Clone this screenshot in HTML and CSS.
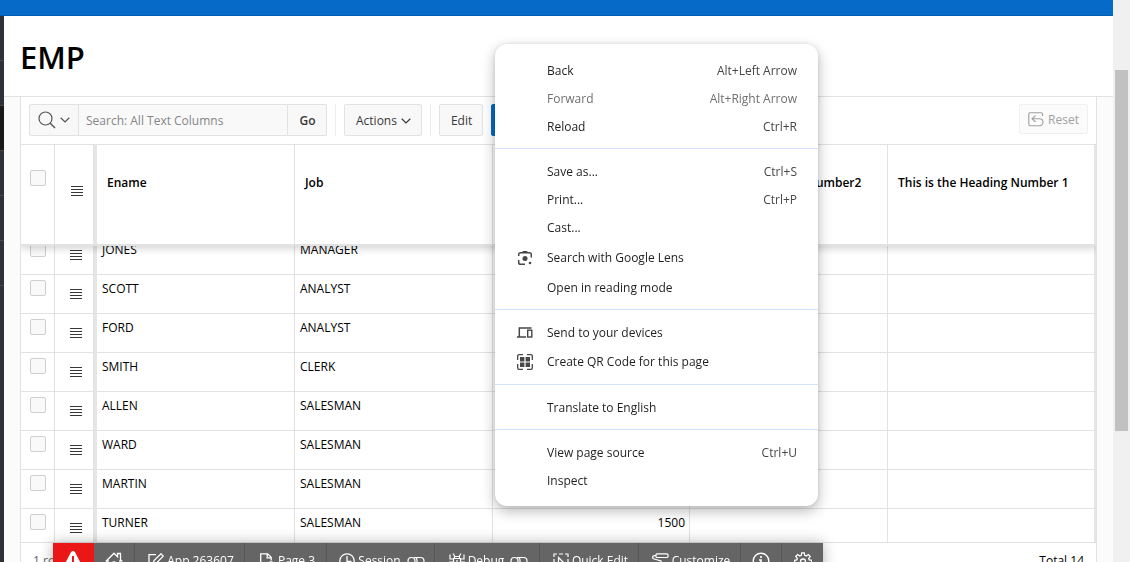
FILE: index.html
```html
<!DOCTYPE html>
<html lang="en">
<head>
<meta charset="utf-8">
<title>EMP</title>
<link rel="stylesheet" href="styles.css">
</head>
<body>
<svg class="defs" aria-hidden="true">
  <symbol id="i-rows" viewBox="0 0 12 10"><path d="M0 .5h12M0 3.5h12M0 6.5h12M0 9.5h12" fill="none" stroke="currentColor"/></symbol>
  <symbol id="i-down" viewBox="0 0 10 6"><path d="M.7.8 5 5 9.300.8" fill="none" stroke="currentColor" stroke-width="1.2"/></symbol>
  <symbol id="i-switch" viewBox="0 0 18 10"><circle cx="4.500" cy="5" r="3.500" fill="none" stroke="currentColor" stroke-width="1.200"/><path d="M7 1.500h6.500a3.500 3.500 0 0 1 0 7c-2.500 0-3.500-1.500-3.500-3.500s0-2.500-1-3.500" fill="none" stroke="currentColor" stroke-width="1.200"/></symbol>
</svg>
<div class="window">
  <div class="app">
    <div class="topbar"></div>
    <div class="shell">
      <nav class="sidenav" aria-label="Main">
        <span class="nav-item"></span><span class="nav-item"></span><span class="nav-item current"></span>
        <span class="nav-item"></span><span class="nav-item"></span><span class="nav-item"></span>
      </nav>
      <main class="main">
        <header class="title"><h1>EMP</h1></header>
        <section class="region">
          <div class="toolbar">
            <div class="search">
              <button class="btn column-btn" type="button" aria-label="Select columns to search">
                <svg width="18" height="18" viewBox="0 0 18 18"><circle cx="7.500" cy="7.500" r="6.500" fill="none" stroke="currentColor" stroke-width="1.200"/><path d="m12 12 5 5" stroke="currentColor" stroke-width="1.400"/></svg>
                <svg width="10" height="6"><use href="#i-down"/></svg>
              </button>
              <input class="search-box" type="text" aria-label="Search" placeholder="Search: All Text Columns">
              <button class="btn go" type="button">Go</button>
            </div>
            <span class="divider"></span>
            <button class="btn" type="button">Actions <svg width="10" height="6"><use href="#i-down"/></svg></button>
            <span class="divider"></span>
            <button class="btn" type="button">Edit</button>
            <button class="btn hot" type="button" aria-label="Save"></button>
            <button class="btn reset" type="button" disabled>
              <svg width="16" height="15" viewBox="0 0 16 15" fill="none" stroke="currentColor" stroke-width="1.100"><path d="M14.500 4V2a1.200 1.200 0 0 0-1.200-1.200H2A1.200 1.200 0 0 0 .8 2v10.500A1.200 1.200 0 0 0 2 13.700h9.500a3.500 3.500 0 0 0 0-7H4.500M7.500 3.500 4 6.700 7.500 10"/></svg>
              Reset
            </button>
          </div>
          <div class="grid-head">
            <table class="grid">
              <colgroup><col class="c-check"><col class="c-menu"><col class="c-data"><col class="c-data"><col class="c-num"><col class="c-data"><col></colgroup>
              <thead><tr>
                <th class="check"><input type="checkbox" aria-label="Select all"></th>
                <th class="menu"><svg width="12" height="10"><use href="#i-rows"/></svg></th>
                <th>Ename</th><th>Job</th><th></th><th class="tight">This is the Heading Number2</th><th>This is the Heading Number 1</th>
              </tr></thead>
            </table>
          </div>
          <div class="grid-body">
            <table class="grid">
              <colgroup><col class="c-check"><col class="c-menu"><col class="c-data"><col class="c-data"><col class="c-num"><col class="c-data"><col></colgroup>
              <tbody>
                <tr><td class="check"><input type="checkbox" aria-label="Select JONES"></td><td class="menu"><svg width="12" height="10"><use href="#i-rows"/></svg></td><td>JONES</td><td>MANAGER</td><td></td><td></td><td></td></tr>
                <tr><td class="check"><input type="checkbox" aria-label="Select SCOTT"></td><td class="menu"><svg width="12" height="10"><use href="#i-rows"/></svg></td><td>SCOTT</td><td>ANALYST</td><td></td><td></td><td></td></tr>
                <tr><td class="check"><input type="checkbox" aria-label="Select FORD"></td><td class="menu"><svg width="12" height="10"><use href="#i-rows"/></svg></td><td>FORD</td><td>ANALYST</td><td></td><td></td><td></td></tr>
                <tr><td class="check"><input type="checkbox" aria-label="Select SMITH"></td><td class="menu"><svg width="12" height="10"><use href="#i-rows"/></svg></td><td>SMITH</td><td>CLERK</td><td></td><td></td><td></td></tr>
                <tr><td class="check"><input type="checkbox" aria-label="Select ALLEN"></td><td class="menu"><svg width="12" height="10"><use href="#i-rows"/></svg></td><td>ALLEN</td><td>SALESMAN</td><td></td><td></td><td></td></tr>
                <tr><td class="check"><input type="checkbox" aria-label="Select WARD"></td><td class="menu"><svg width="12" height="10"><use href="#i-rows"/></svg></td><td>WARD</td><td>SALESMAN</td><td></td><td></td><td></td></tr>
                <tr><td class="check"><input type="checkbox" aria-label="Select MARTIN"></td><td class="menu"><svg width="12" height="10"><use href="#i-rows"/></svg></td><td>MARTIN</td><td>SALESMAN</td><td></td><td></td><td></td></tr>
                <tr><td class="check"><input type="checkbox" aria-label="Select TURNER"></td><td class="menu"><svg width="12" height="10"><use href="#i-rows"/></svg></td><td>TURNER</td><td>SALESMAN</td><td class="num">1500</td><td></td><td></td></tr>
              </tbody>
            </table>
          </div>
          <footer class="grid-foot"><span class="selected">1 rows selected</span><span>Total 14</span></footer>
        </section>
      </main>
    </div>
  </div>
  <div class="scrollbar"><div class="thumb"></div></div>
</div>

<div class="devbar">
  <button class="dev alert" type="button" aria-label="Errors"><svg width="20" height="20" viewBox="0 0 20 20"><path d="M10 0c1 0 1.700.6 2.200 1.500l7.300 14c1 2 0 3.500-2 3.500h-15c-2 0-3-1.500-2-3.500l7.300-14C8.300.6 9 0 10 0z" fill="#fff"/><path d="M10 5v7" stroke="#eb1717" stroke-width="2"/></svg></button>
  <button class="dev home" type="button" aria-label="Home"><svg width="18" height="18" viewBox="0 0 18 18"><path d="M.8 9.500 9 1.200l3.500 3.500V1.500h3v6.200l1.800 1.800M3 8v9h4v-5a2 2 0 0 1 4 0v5h4V8" fill="none" stroke="currentColor" stroke-width="1.300"/></svg></button>
  <button class="dev text appb" type="button"><svg width="16" height="16" viewBox="0 0 16 16"><path d="M8 1.700H1v13h12V9M5 11l1-3.500L13 .8l2.300 2.300L8.500 10z" fill="none" stroke="currentColor" stroke-width="1.300"/></svg>App 263607</button>
  <button class="dev text pageb" type="button"><svg width="16" height="16" viewBox="0 0 16 16"><path d="M7 14.500H1.700V.8h7l3.500 3.500V7.500M8.200 .8v4h4" fill="none" stroke="currentColor" stroke-width="1.300"/><circle cx="12" cy="11.500" r="2.500" fill="none" stroke="currentColor" stroke-width="1.300"/></svg>Page 3</button>
  <button class="dev text session" type="button"><svg width="16" height="16" viewBox="0 0 16 16"><circle cx="8" cy="8" r="7.200" fill="none" stroke="currentColor" stroke-width="1.300"/><path d="M8 3v5.500h4.500" fill="none" stroke="currentColor" stroke-width="1.300"/></svg>Session<svg class="sw" width="18" height="10"><use href="#i-switch"/></svg></button>
  <button class="dev text debug" type="button"><svg width="16" height="16" viewBox="0 0 16 16"><path d="M4.500 5.500h7v5a3.500 3.500 0 0 1-7 0zM5.500 5.500V3.500h5v2M4 .5l2 3M12 .5l-2 3M1 1.500v4.500h3.500M15 1.500v4.500h-3.500M0 9h4.500M16 9h-4.500M8 7V14" fill="none" stroke="currentColor" stroke-width="1.200"/></svg>Debug<svg class="sw" width="18" height="10"><use href="#i-switch"/></svg></button>
  <button class="dev text quick" type="button"><svg width="16" height="16" viewBox="0 0 16 16"><path d="M1 4V1h3M6 1h4M12 1h3v3M1 6v4M1 12v3h3M15 6v4M15 12v3h-3" fill="none" stroke="currentColor" stroke-width="1.200"/><path d="M5.500 4.500v8l2-2h4z" fill="none" stroke="currentColor" stroke-width="1.200"/></svg>Quick Edit</button>
  <button class="dev text custom" type="button"><svg width="17" height="16" viewBox="0 0 17 16"><path d="M5 .8h10a1 1 0 0 1 1 1v1.700a1 1 0 0 1-1 1H5a1 1 0 0 1-1-1V1.800a1 1 0 0 1 1-1zM4 2.600H2.500a1.700 1.700 0 0 0-.3 3.400L9 8v7" fill="none" stroke="currentColor" stroke-width="1.200"/></svg>Customize</button>
  <button class="dev info" type="button" aria-label="Info"><svg width="18" height="18" viewBox="0 0 18 18"><circle cx="9" cy="9" r="7.800" fill="none" stroke="currentColor" stroke-width="1.400"/><path d="M9 4v2M7 8h2v5M6.500 13h5" fill="none" stroke="currentColor" stroke-width="1.600"/></svg></button>
  <button class="dev gear" type="button" aria-label="Settings"><svg width="18" height="18" viewBox="0 0 18 18"><path d="m7.300 3.300.4-2.500h2.600l.4 2.500 1.500.7 2.100-1.500 1.900 1.900-1.500 2.100.6 1.500 2.500.4v2.500l-2.500.4-.6 1.500 1.500 2.100-1.900 1.900-2.100-1.500-1.500.6-.4 2H7.700l-.4-2-1.500-.6-2.100 1.500-1.900-1.900 1.500-2.100-.6-1.500-2-.4V8.400l2-.4.6-1.500-1.500-2.100 1.900-1.900L5.800 4z" fill="none" stroke="currentColor" stroke-width="1.300"/><circle cx="9" cy="9.500" r="2.500" fill="none" stroke="currentColor" stroke-width="1.300"/></svg></button>
</div>

<div class="context">
  <button class="item" type="button"><span>Back</span><kbd>Alt+Left Arrow</kbd></button>
  <button class="item" type="button" disabled><span>Forward</span><kbd>Alt+Right Arrow</kbd></button>
  <button class="item" type="button"><span>Reload</span><kbd>Ctrl+R</kbd></button>
  <hr>
  <button class="item" type="button"><span>Save as...</span><kbd>Ctrl+S</kbd></button>
  <button class="item" type="button"><span>Print...</span><kbd>Ctrl+P</kbd></button>
  <button class="item" type="button"><span>Cast...</span></button>
  <button class="item lens" type="button"><svg width="16" height="16" viewBox="0 0 16 16"><path d="M1.700 6V4.500a1.800 1.800 0 0 1 1.800-1.800h9a1.800 1.800 0 0 1 1.800 1.800V7.500M1.700 10v2.500a1.800 1.800 0 0 0 1.800 1.800H8" fill="none" stroke="currentColor" stroke-width="1.500"/><path d="M5 2.500 6 1h4l1 1.500z" fill="currentColor"/><circle cx="8" cy="8.500" r="2.500" fill="currentColor"/><circle cx="13" cy="13" r="1.300" fill="currentColor"/></svg><span>Search with Google Lens</span></button>
  <button class="item" type="button"><span>Open in reading mode</span></button>
  <hr>
  <button class="item" type="button"><svg width="16" height="16" viewBox="0 0 16 16"><path d="M14.500 3H2.300v8.500M0 12h9" fill="none" stroke="currentColor" stroke-width="1.500"/><rect x="10.700" y="5.200" width="4.100" height="6.800" fill="none" stroke="currentColor" stroke-width="1.400"/></svg><span>Send to your devices</span></button>
  <button class="item qr" type="button"><svg width="16" height="16" viewBox="0 0 16 16"><path d="M.7 6V2A1.300 1.300 0 0 1 2 .7h4M10 .7h4A1.300 1.300 0 0 1 15.300 2v4M15.300 10v4a1.300 1.300 0 0 1-1.300 1.300h-4M6 15.300H2A1.300 1.300 0 0 1 .7 14v-4" fill="none" stroke="currentColor" stroke-width="1.300"/><path d="M3 3h4.400v4.400H3zM8.600 3H13v4.400H8.600zM3 8.600h4.400V13H3zM8.600 8.600H13V13H8.600z" fill="currentColor"/></svg><span>Create QR Code for this page</span></button>
  <hr>
  <button class="item" type="button"><span>Translate to English</span></button>
  <hr>
  <button class="item" type="button"><span>View page source</span><kbd>Ctrl+U</kbd></button>
  <button class="item" type="button"><span>Inspect</span></button>
</div>
</body>
</html>
```
FILE: styles.css
```css
* { box-sizing: border-box; }
body {
  margin: 0;
  overflow: hidden;
  font-family: "Open Sans", "Noto Sans", sans-serif;
  font-size: 12px;
  line-height: 16px;
  color: #000;
}
button, input, kbd { font: inherit; }
svg { flex: none; display: block; }
.defs { position: absolute; width: 0; height: 0; }

.window { display: flex; height: 100vh; }
.app { flex: 1; min-width: 0; display: flex; flex-direction: column; }
.topbar { flex: none; height: 16px; background: #056ac8; border-bottom: 1px solid #045cae; }
.shell { flex: 1; min-height: 0; display: flex; }
.sidenav { flex: none; width: 4px; background: #2e3136; }
.nav-item { display: block; height: 45px; border-bottom: 1px solid #45484d; }
.nav-item.current { background: #17191b; }
.scrollbar { flex: none; width: 17px; padding: 70px 2px 0; background: #f0f0f0; }
.thumb { height: 361px; background: #c1c1c1; }

.main { flex: 1; min-width: 0; display: flex; flex-direction: column; background: #fbfbfb; }
.title { flex: none; display: flex; align-items: center; height: 81px; padding: 2px 16px 0; background: #fff; border-bottom: 1px solid #e2e2e2; }
.title h1 { margin: 0; font-size: 31px; line-height: 40px; font-weight: 600; }
.region { flex: 1; min-height: 0; display: flex; flex-direction: column; margin: 0 16px; background: #fff; border: solid #e2e2e2; border-width: 0 1px; }

.toolbar { flex: none; display: flex; gap: 8px; height: 48px; padding: 7px 8px 8px; border-bottom: 1px solid #e2e2e2; }
.btn { display: flex; align-items: center; justify-content: center; gap: 4px; height: 32px; padding: 2px 10px 0 11px; color: #383838; background: #f8f8f8; border: 1px solid #e2e2e2; border-radius: 2px; white-space: nowrap; }
.search { display: flex; width: 298px; }
.column-btn { width: 50px; padding: 0; border-radius: 2px 0 0 2px; color: #555; }
.search-box { flex: 1; min-width: 0; height: 32px; padding: 1px 7px 0; background: #f9f9f9; border: solid #e2e2e2; border-width: 1px 0; }
.search-box::placeholder { color: #868686; opacity: 1; }
.go { width: 40px; font-weight: 600; border-radius: 0 2px 2px 0; }
.divider { width: 1px; background: #ececec; }
.hot { width: 60px; background: #056ac8; border-color: #056ac8; }
.reset { height: 30px; margin-left: auto; padding: 1px 8px 0; color: #a0a0a0; background: #fbfbfb; border-color: #f0f0f0; gap: 4px; }

.grid { width: 100%; table-layout: fixed; border-collapse: separate; border-spacing: 0; }
.c-check { width: 34px; }
.c-menu { width: 42px; }
.c-data { width: 198px; }
.c-num { width: 197px; }
.grid th, .grid td { border-right: 1px solid #e2e2e2; text-align: left; white-space: nowrap; }
.grid th { height: 99px; padding: 0 10px 24px; font-weight: 600; }
.grid td { height: 39px; padding: 6px 5px 0; vertical-align: top; border-bottom: 1px solid #e2e2e2; }
.grid .menu { padding: 14px 0 0 15px; border-right: 4px solid #e5e5e5; }
.grid th.menu { padding: 0 0 8px 16px; }
.grid th.tight { padding: 0 4px 24px; }
.grid .check { padding: 5px 0 0 9px; }
.grid th.check { padding: 0 0 33px 9px; }
.grid th:last-child, .grid td:last-child { border-right: 2px solid #e5e5e5; }
.grid .num { text-align: right; padding-right: 4px; }
.grid input { appearance: none; display: block; width: 16px; height: 16px; margin: 0; background: #f9f9f9; border: 1px solid #cfcfcf; border-radius: 2px; }
.grid svg { color: #383838; }
.grid-head { flex: none; position: relative; z-index: 1; background: #fff; border-bottom: 2px solid #e2e2e2; box-shadow: 0 3px 7px rgba(0, 0, 0, .16); clip-path: inset(0 0 -12px 0); }
.grid-body { flex: 1; min-height: 0; overflow: hidden; }
.grid-body .grid { margin-top: -10px; }
.grid-foot { flex: none; display: flex; justify-content: space-between; height: 20px; padding: 10px 12px 0; border-top: 1px solid #e2e2e2; }
.selected { color: #666; }

.devbar { position: fixed; left: 53px; bottom: -16px; z-index: 2; display: flex; height: 35px; color: #fff; background: #656565; box-shadow: 0 0 14px rgba(0, 0, 0, .3); }
.dev { display: flex; align-items: center; justify-content: center; gap: 3px; padding: 0; color: inherit; background: none; border: 0; border-right: 1px solid #565656; white-space: nowrap; }
.dev.text { padding-left: 3px; }
.dev:last-child { border-right: 0; }
.alert { width: 41px; background: #eb1717; border-right-color: #eb1717; }
.home, .info, .gear { width: 41px; }
.appb { width: 110px; }
.pageb { width: 82px; }
.session { width: 108px; }
.debug { width: 105px; }
.quick { width: 99px; }
.custom { width: 102px; }
.sw { margin-left: 3px; }

.context { position: fixed; left: 495px; top: 44px; z-index: 5; width: 323px; padding: 13px 0 11px; background: #fff; border-radius: 12px; box-shadow: 0 5px 14px rgba(0, 0, 0, .28), 0 0 4px rgba(0, 0, 0, .1); }
.item { display: grid; grid-template-columns: 30px 1fr auto; align-items: center; width: 100%; height: 28px; padding: 0 21px 0 22px; background: none; border: 0; color: #1f1f1f; text-align: left; white-space: nowrap; }
.item svg { grid-area: 1 / 1; color: #474747; }
.item span { grid-area: 1 / 2; }
.item kbd { grid-area: 1 / 3; color: #474747; }
.item:disabled, .item:disabled kbd { color: #707070; }
.lens { height: 32px; }
.qr { height: 30px; }
.context hr { height: 1px; margin: 7px 0 9px; border: 0; background: #d3e3fd; }
```
